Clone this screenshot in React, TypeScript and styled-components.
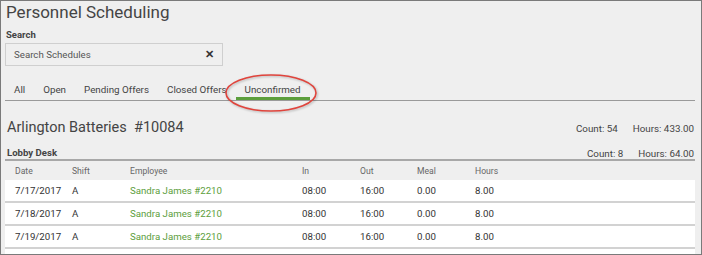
import React from "react";
import styled, { createGlobalStyle } from "styled-components";

const GlobalStyle = createGlobalStyle`
  html, body {
    margin: 0;
    padding: 0;
    background: #efefef;
  }
  * {
    box-sizing: border-box;
  }
`;

const Frame = styled.div`
  position: relative;
  width: 702px;
  height: 255px;
  overflow: hidden;
  border: 1px solid #7a7a7a;
  background: #efefef;
  padding: 0 6px 0 4px;
  font-family: Roboto, "Liberation Sans", Arial, sans-serif;
  color: #444;
`;

const Title = styled.h1`
  margin: 0 0 0 1px;
  font-size: 17px;
  font-weight: 400;
  line-height: 22px;
  color: #444;
`;

const Label = styled.div`
  margin: 5px 0 0 1px;
  font-size: 9.5px;
  font-weight: 700;
  line-height: 13px;
  color: #444;
`;

const SearchBox = styled.div`
  display: flex;
  align-items: center;
  justify-content: space-between;
  width: 218px;
  height: 23px;
  margin-top: 2px;
  padding: 0 8px 0 8px;
  border: 1px solid #cfcfcf;
  font-size: 9.7px;
  color: #555;
`;

const Clear = styled.span`
  font-size: 11px;
  font-weight: 700;
  color: #333;
`;

const TabBar = styled.div`
  position: relative;
  display: flex;
  margin-top: 10px;
  border-bottom: 1px solid #9a9a9a;
`;

const Tab = styled.div<{ $active?: boolean }>`
  height: 24px;
  padding: 6px 9px 0;
  display: flex;
  align-items: center;
  font-size: 9.8px;
  color: #444;
  border-bottom: 3px solid ${(p) => (p.$active ? "#5c9e3c" : "transparent")};
`;

const Callout = styled.svg`
  position: absolute;
  left: 214px;
  top: -4px;
  width: 104px;
  height: 44px;
  overflow: visible;
  filter: drop-shadow(1px 1px 1px rgba(0, 0, 0, 0.25));
`;

const GroupHead = styled.div`
  display: flex;
  align-items: center;
  justify-content: space-between;
  margin-top: 18px;
  padding-left: 2px;
`;

const GroupName = styled.div`
  font-size: 14.5px;
  line-height: 18px;
  color: #444;
`;

const Totals = styled.div`
  display: flex;
  gap: 15px;
  font-size: 9.8px;
  color: #444;
  padding-right: 1px;
`;

const SubHead = styled.div`
  display: flex;
  align-items: flex-end;
  justify-content: space-between;
  margin-top: 9px;
  padding: 0 0 0 2px;
  border-bottom: 2px solid #a8a8a8;
`;

const SubName = styled.div`
  font-size: 9.6px;
  font-weight: 700;
  line-height: 13px;
  color: #444;
`;

const Grid = styled.div<{ $head?: boolean }>`
  display: grid;
  grid-template-columns: 57px 58px 172px 58px 57px 58px 1fr;
  align-items: center;
  padding-left: 10px;
  height: ${(p) => (p.$head ? "19px" : "23px")};
  font-size: ${(p) => (p.$head ? "8.6px" : "9.7px")};
  color: ${(p) => (p.$head ? "#666" : "#333")};
  background: ${(p) => (p.$head ? "transparent" : "#fff")};
  border-bottom: ${(p) => (p.$head ? "none" : "2px solid #d2d2d2")};
`;

const Employee = styled.span`
  color: #5c9e3c;
`;

const tabs = ["All", "Open", "Pending Offers", "Closed Offers", "Unconfirmed"];

const rows = [
  { date: "7/17/2017", shift: "A", emp: "Sandra James #2210", inT: "08:00", out: "16:00", meal: "0.00", hours: "8.00" },
  { date: "7/18/2017", shift: "A", emp: "Sandra James #2210", inT: "08:00", out: "16:00", meal: "0.00", hours: "8.00" },
  { date: "7/19/2017", shift: "A", emp: "Sandra James #2210", inT: "08:00", out: "16:00", meal: "0.00", hours: "8.00" },
];

export default function App() {
  return (
    <>
      <GlobalStyle />
      <Frame>
        <Title>Personnel Scheduling</Title>
        <Label>Search</Label>
        <SearchBox>
          <span>Search Schedules</span>
          <Clear>✕</Clear>
        </SearchBox>

        <TabBar>
          {tabs.map((t) => (
            <Tab key={t} $active={t === "Unconfirmed"}>
              {t}
            </Tab>
          ))}
          <Callout viewBox="0 0 104 44">
            <ellipse cx="52" cy="21" rx="45" ry="18" fill="none" stroke="#e0443c" strokeWidth="1.6" />
          </Callout>
        </TabBar>

        <GroupHead>
          <GroupName>Arlington Batteries&nbsp;&nbsp;#10084</GroupName>
          <Totals>
            <span>Count: 54</span>
            <span>Hours: 433.00</span>
          </Totals>
        </GroupHead>

        <SubHead>
          <SubName>Lobby Desk</SubName>
          <Totals>
            <span>Count: 8</span>
            <span>Hours: 64.00</span>
          </Totals>
        </SubHead>

        <Grid $head>
          <span>Date</span>
          <span>Shift</span>
          <span>Employee</span>
          <span>In</span>
          <span>Out</span>
          <span>Meal</span>
          <span>Hours</span>
        </Grid>
        {rows.map((r) => (
          <Grid key={r.date}>
            <span>{r.date}</span>
            <span>{r.shift}</span>
            <Employee>{r.emp}</Employee>
            <span>{r.inT}</span>
            <span>{r.out}</span>
            <span>{r.meal}</span>
            <span>{r.hours}</span>
          </Grid>
        ))}
        <Grid />
      </Frame>
    </>
  );
}
